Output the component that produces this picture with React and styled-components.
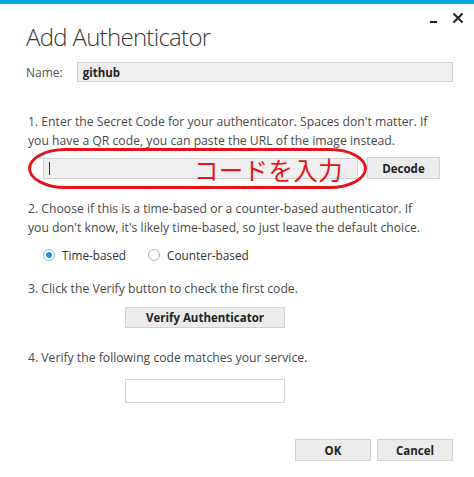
import styled, { createGlobalStyle } from 'styled-components'

const GlobalStyle = createGlobalStyle`
  html, body {
    margin: 0;
    padding: 0;
    background: #ffffff;
  }
  body {
    font-family: "Open Sans", "Noto Sans", "Noto Sans CJK JP", sans-serif;
    color: #444;
  }
`

const Page = styled.div`
  width: 474px;
  height: 477px;
  position: relative;
  overflow: hidden;
  background: #fff;
`

const AccentBar = styled.div`
  height: 4px;
  background: #00a6de;
`

const Header = styled.header`
  display: flex;
  justify-content: space-between;
  align-items: flex-start;
  padding: 0 10px 0 26px;
  height: 56px;
`

const Title = styled.h1`
  margin: 16px 0 0 0;
  font-size: 24px;
  font-weight: 300;
  color: #3a3a3a;
  letter-spacing: -0.7px;
`

const Controls = styled.div`
  display: flex;
  gap: 14px;
  padding-top: 6px;
  color: #222;
`

const Body = styled.main`
  padding: 0 21px 0 26px;
  font-size: 12.2px;
`

const NameRow = styled.div`
  display: flex;
  align-items: center;
  gap: 14px;
  margin-top: 2px;
`

const Label = styled.span`
  color: #555;
  font-size: 12px;
`

const TextBox = styled.div`
  box-sizing: border-box;
  height: ${p => p.tall ? 24 : 20}px;
  width: ${p => p.width ? p.width + 'px' : 'auto'};
  flex: ${p => p.grow ? 1 : 'none'};
  background: ${p => p.light ? '#ffffff' : '#efefef'};
  border: 1px solid #d3d3d3;
  padding: 0 5px;
  display: flex;
  align-items: center;
  font-size: 11.5px;
  font-weight: 700;
  color: #222;
`

const Step = styled.p`
  margin: ${p => p.top}px 0 0 2px;
  line-height: 18.5px;
  color: #4a4a4a;
`

const CodeRow = styled.div`
  position: relative;
  display: flex;
  align-items: center;
  gap: 9px;
  margin-top: 7px;
  padding-left: 17px;
`

const Caret = styled.span`
  width: 1px;
  height: 13px;
  background: #333;
`

const Annotation = styled.span`
  position: absolute;
  left: 168px;
  top: -5px;
  font-size: 24.5px;
  font-weight: 400;
  color: #e5131b;
  font-family: "Noto Sans CJK JP", sans-serif;
  letter-spacing: 0.3px;
`

const Ellipse = styled.div`
  position: absolute;
  left: 2px;
  top: -9px;
  width: 339px;
  height: 41px;
  box-sizing: border-box;
  border: 3px solid #e5131b;
  border-radius: 40px / 22px;
  pointer-events: none;
`

const Button = styled.button`
  box-sizing: border-box;
  width: ${p => p.width}px;
  height: ${p => p.height || 22}px;
  background: #ececec;
  border: 1px solid #d2d2d2;
  font-family: "Open Sans", sans-serif;
  font-size: 11.5px;
  font-weight: 700;
  color: #222;
  padding: 0;
  position: relative;
  z-index: 1;
`

const RadioRow = styled.div`
  display: flex;
  align-items: center;
  gap: 22px;
  margin-top: 10px;
  padding-left: 17px;
`

const RadioOption = styled.label`
  display: flex;
  align-items: center;
  gap: 7px;
  font-size: 11.8px;
  color: #333;
`

const RadioDot = styled.span`
  box-sizing: border-box;
  width: 12px;
  height: 12px;
  border-radius: 50%;
  border: 1px solid ${p => p.checked ? '#8fb8cc' : '#b5b5b5'};
  background: #fff;
  display: flex;
  align-items: center;
  justify-content: center;
  &::after {
    content: "";
    width: 6px;
    height: 6px;
    border-radius: 50%;
    background: ${p => p.checked ? '#1d9bd7' : 'transparent'};
  }
`

const Indented = styled.div`
  padding-left: 99px;
  margin-top: ${p => p.top}px;
`

const Footer = styled.footer`
  display: flex;
  justify-content: flex-end;
  gap: 6px;
  margin-top: 36px;
`

const MinIcon = () => (
  <svg width="9" height="14" viewBox="0 0 9 14">
    <rect x="1" y="11" width="7" height="2" fill="#222" />
  </svg>
)

const CloseIcon = () => (
  <svg width="12" height="14" viewBox="0 0 12 14">
    <path d="M1.5 3.5 L10.5 12.5 M10.5 3.5 L1.5 12.5" stroke="#222" strokeWidth="2" />
  </svg>
)

export default function App() {
  return (
    <Page>
      <GlobalStyle />
      <AccentBar />
      <Header>
        <Title>Add Authenticator</Title>
        <Controls>
          <MinIcon />
          <CloseIcon />
        </Controls>
      </Header>
      <Body>
        <NameRow>
          <Label>Name:</Label>
          <TextBox grow>github</TextBox>
        </NameRow>

        <Step top={31}>
          1. Enter the Secret Code for your authenticator. Spaces don't matter. If<br />
          you have a QR code, you can paste the URL of the image instead.
        </Step>
        <CodeRow>
          <Ellipse />
          <TextBox width={315} style={{ height: 21 }}>
            <Caret />
          </TextBox>
          <Annotation>コードを入力</Annotation>
          <Button width={73}>Decode</Button>
        </CodeRow>

        <Step top={21}>
          2. Choose if this is a time-based or a counter-based authenticator. If<br />
          you don't know, it's likely time-based, so just leave the default choice.
        </Step>
        <RadioRow>
          <RadioOption><RadioDot checked />Time-based</RadioOption>
          <RadioOption><RadioDot />Counter-based</RadioOption>
        </RadioRow>

        <Step top={17}>3. Click the Verify button to check the first code.</Step>
        <Indented top={8}>
          <Button width={160} height={21}>Verify Authenticator</Button>
        </Indented>

        <Step top={21}>4. Verify the following code matches your service.</Step>
        <Indented top={12}>
          <TextBox width={160} tall light />
        </Indented>

        <Footer>
          <Button width={76}>OK</Button>
          <Button width={76}>Cancel</Button>
        </Footer>
      </Body>
    </Page>
  )
}
